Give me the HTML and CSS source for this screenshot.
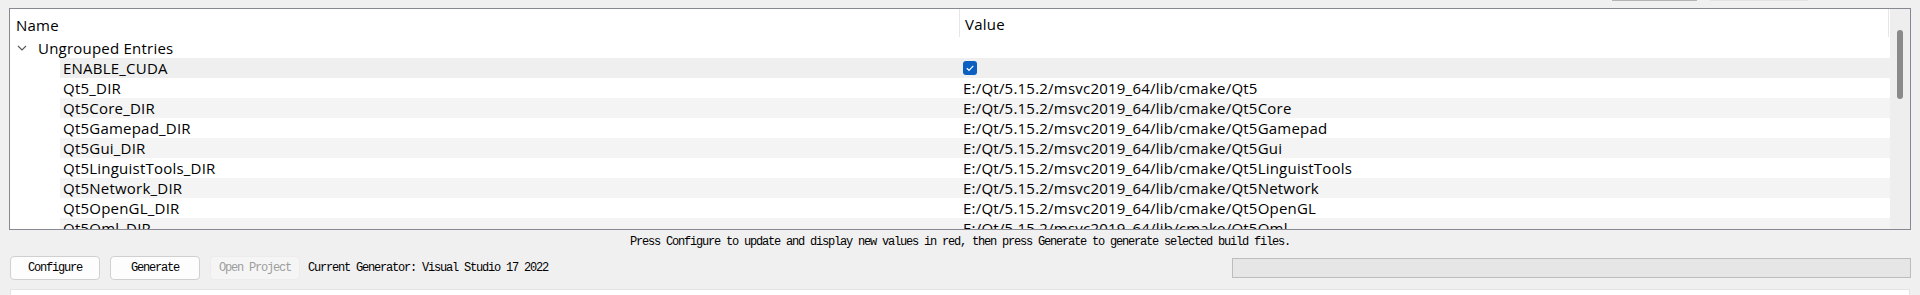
FILE: index.html
```html
<!DOCTYPE html>
<html lang="en">

<head>
  <meta charset="UTF-8" />
  <title>CMake</title>
  <link rel="stylesheet" href="styles.css">
</head>

<body>
  <div class="top">
    <span class="stub"></span>
    <span class="stub dim"></span>
  </div>

  <div class="tree">
    <div class="tree-body">
      <div class="tree-head">
        <div class="col-name">Name</div>
        <div class="col-value">Value</div>
      </div>

      <div class="group">
        <svg class="chevron" width="10" height="6" viewBox="0 0 10 6">
          <path d="M1 1 L5 5 L9 1" fill="none" stroke="#555" stroke-width="1.1" />
        </svg>
        <span>Ungrouped Entries</span>
      </div>

      <div class="entry current">
        <div class="name">ENABLE_CUDA</div>
        <div class="value">
          <span class="check">
            <svg width="14" height="14" viewBox="0 0 14 14">
              <path d="M3.8 7.2 L6 9.3 L10.3 4.9" fill="none" stroke="#fff" stroke-width="1.2" />
            </svg>
          </span>
        </div>
      </div>
      <div class="entry">
        <div class="name">Qt5_DIR</div>
        <div class="value">E:/Qt/5.15.2/msvc2019_64/lib/cmake/Qt5</div>
      </div>
      <div class="entry alt">
        <div class="name">Qt5Core_DIR</div>
        <div class="value">E:/Qt/5.15.2/msvc2019_64/lib/cmake/Qt5Core</div>
      </div>
      <div class="entry">
        <div class="name">Qt5Gamepad_DIR</div>
        <div class="value">E:/Qt/5.15.2/msvc2019_64/lib/cmake/Qt5Gamepad</div>
      </div>
      <div class="entry alt">
        <div class="name">Qt5Gui_DIR</div>
        <div class="value">E:/Qt/5.15.2/msvc2019_64/lib/cmake/Qt5Gui</div>
      </div>
      <div class="entry">
        <div class="name">Qt5LinguistTools_DIR</div>
        <div class="value">E:/Qt/5.15.2/msvc2019_64/lib/cmake/Qt5LinguistTools</div>
      </div>
      <div class="entry alt">
        <div class="name">Qt5Network_DIR</div>
        <div class="value">E:/Qt/5.15.2/msvc2019_64/lib/cmake/Qt5Network</div>
      </div>
      <div class="entry">
        <div class="name">Qt5OpenGL_DIR</div>
        <div class="value">E:/Qt/5.15.2/msvc2019_64/lib/cmake/Qt5OpenGL</div>
      </div>
      <div class="entry alt">
        <div class="name">Qt5Qml_DIR</div>
        <div class="value">E:/Qt/5.15.2/msvc2019_64/lib/cmake/Qt5Qml</div>
      </div>
    </div>

    <div class="vscroll">
      <div class="thumb"></div>
    </div>
  </div>

  <div class="status">Press Configure to update and display new values in red, then press Generate to generate selected build files.</div>

  <div class="actions">
    <button class="btn">Configure</button>
    <button class="btn">Generate</button>
    <button class="btn" disabled>Open Project</button>
    <span class="generator">Current Generator: Visual Studio 17 2022</span>
    <div class="progress"></div>
  </div>

  <div class="output"></div>
</body>

</html>
```

FILE: styles.css
```css
* {
  box-sizing: border-box;
}

body {
  margin: 0;
  height: 295px;
  overflow: hidden;
  background: #f0f0f0;
  font-family: "Open Sans", "Noto Sans", sans-serif;
  font-size: 15px;
  letter-spacing: 0.22px;
  color: #000;
}

/* bottoms of the toolbar buttons cut off above */
.top {
  height: 8px;
  display: flex;
  justify-content: flex-end;
  align-items: flex-start;
  gap: 13px;
  padding-right: 112px;
}

.stub {
  width: 85px;
  height: 1px;
  background: #b4b4b4;
}

.stub.dim {
  width: 98px;
  background: #e2e2e2;
}

.tree {
  margin: 0 9px;
  height: 222px;
  border: 1px solid #868892;
  background: #fff;
  display: grid;
  grid-template-columns: 1fr 20px;
  overflow: hidden;
}

.tree-body {
  overflow: hidden;
}

.tree-head {
  height: 29px;
  display: flex;
}

.col-name {
  width: 949px;
  padding: 2px 0 0 6px;
  display: flex;
  align-items: center;
}

.col-value {
  flex: 1;
  height: 28px;
  margin-right: 1px;
  padding: 2px 0 0 5px;
  display: flex;
  align-items: center;
  border-left: 1px solid #e6e6e6;
  border-right: 1px solid #e6e6e6;
}

.group {
  height: 20px;
  display: flex;
  align-items: center;
  padding-left: 7px;
}

.chevron {
  margin-right: 11px;
}

.entry {
  height: 20px;
  margin-left: 50px;
  display: flex;
  align-items: center;
  white-space: nowrap;
}

.entry.alt {
  background: #f4f4f4;
}

.entry.current {
  background: #efefef;
}

.name {
  width: 899px;
  padding-left: 3px;
}

.value {
  padding-left: 4px;
  display: flex;
  align-items: center;
}

.check {
  width: 14px;
  height: 14px;
  border-radius: 3px;
  background: #0a5fc0;
  display: flex;
}

.vscroll {
  background: #eeeeee;
  padding: 21px 0 0 7px;
}

.thumb {
  width: 6px;
  height: 69px;
  border-radius: 3px;
  background: #8a8a8a;
}

.status,
.btn,
.generator {
  font-family: "Liberation Mono", "DejaVu Sans Mono", monospace;
  font-size: 12px;
  letter-spacing: -1.2px;
}

.status {
  margin-top: 4px;
  height: 16px;
  line-height: 16px;
  text-align: center;
}

.actions {
  margin-top: 6px;
  height: 24px;
  padding: 0 9px 0 10px;
  display: flex;
  align-items: center;
  gap: 10px;
}

.btn {
  width: 90px;
  height: 24px;
  padding: 0;
  border: 1px solid #d0d0d0;
  border-radius: 4px;
  background: #fdfdfd;
  color: #000;
}

.btn:disabled {
  background: #f5f5f5;
  border-color: #ececec;
  color: #9d9d9d;
}

.generator {
  margin-left: -2px;
}

.progress {
  margin-left: auto;
  width: 679px;
  height: 20px;
  border: 1px solid #bcbcbc;
  background: #e6e6e6;
}

.output {
  margin: 9px 10px 0;
  height: 6px;
  background: #fff;
  border: 1px solid #e4e4e4;
  border-bottom: none;
}
```
